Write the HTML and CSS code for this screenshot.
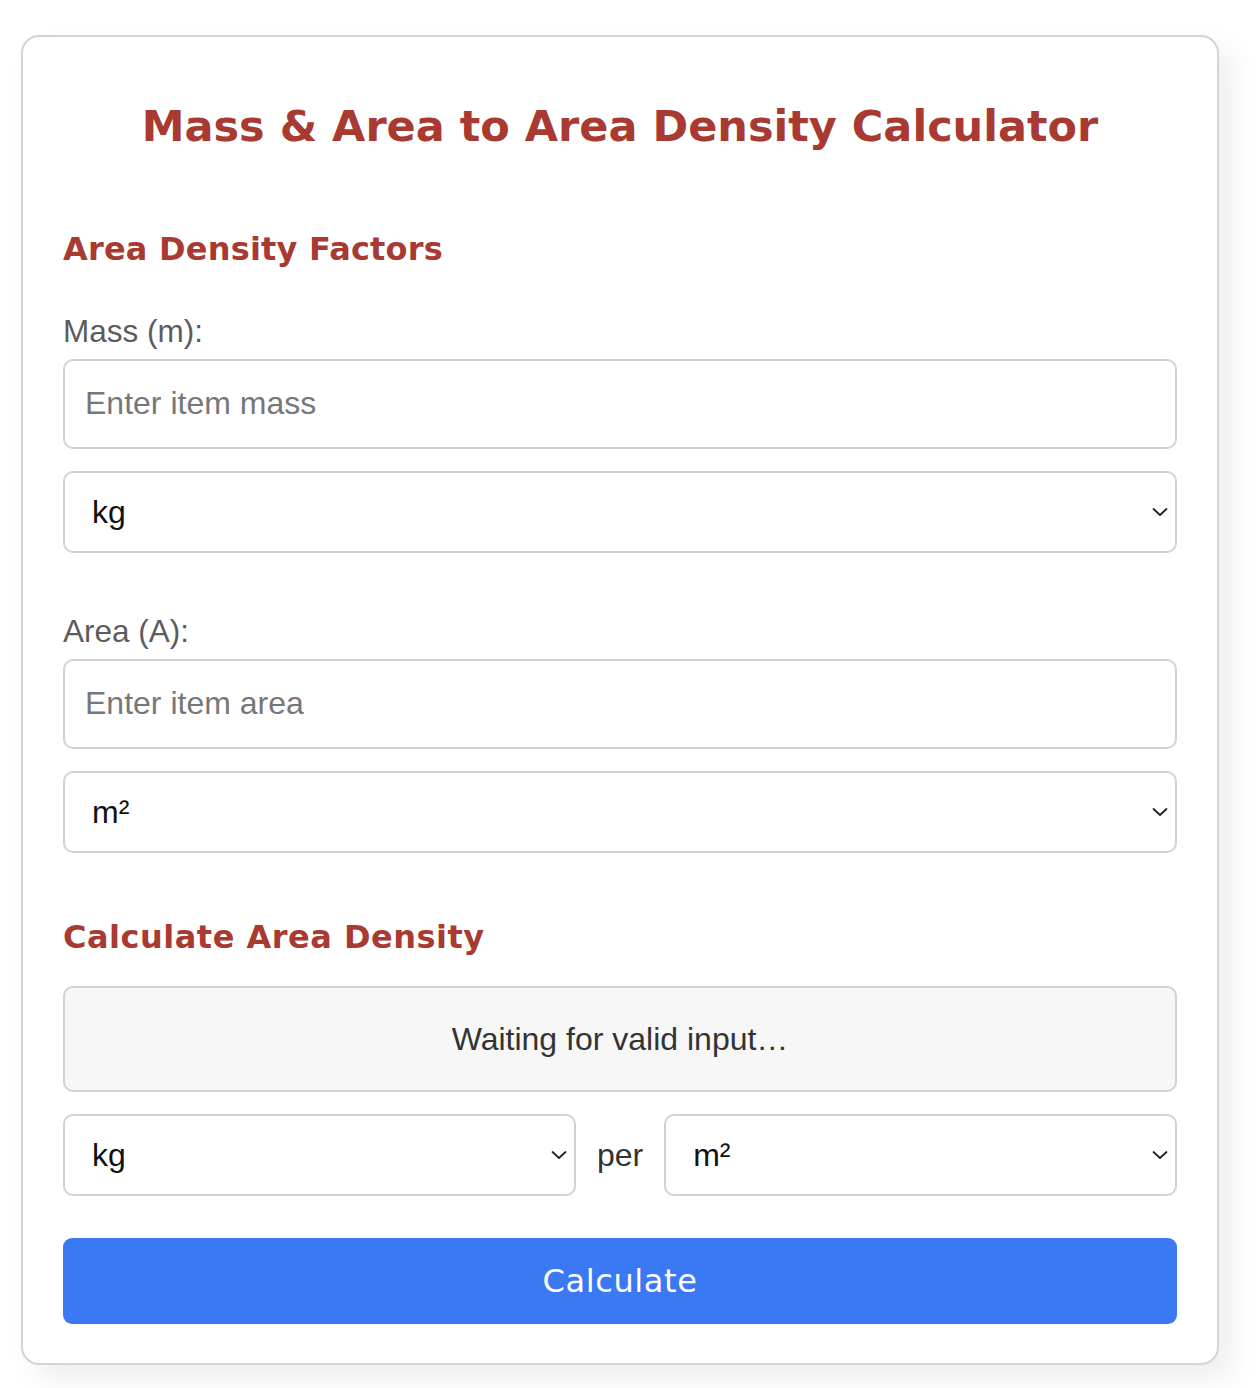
FILE: index.html
```html
<!DOCTYPE html>
<html lang="en">
<head>
<meta charset="utf-8">
<title>Mass &amp; Area to Area Density Calculator</title>
<link rel="stylesheet" href="styles.css">
</head>
<body>
<div class="card">
  <h1 class="title">Mass &amp; Area to Area Density Calculator</h1>

  <h2 class="section">Area Density Factors</h2>

  <div class="group">
    <label class="label" for="mass">Mass (m):</label>
    <input class="field" id="mass" type="text" placeholder="Enter item mass">
    <div class="select-wrap">
      <select class="select"><option>kg</option><option>g</option><option>lb</option></select>
      <svg class="chev" viewBox="0 0 16 10" width="16" height="10"><path d="M1.5 2 L8 8 L14.5 2" fill="none" stroke="#222" stroke-width="1.8" stroke-linecap="round" stroke-linejoin="round"/></svg>
    </div>
  </div>

  <div class="group">
    <label class="label" for="area">Area (A):</label>
    <input class="field" id="area" type="text" placeholder="Enter item area">
    <div class="select-wrap">
      <select class="select"><option>m²</option><option>cm²</option><option>ft²</option></select>
      <svg class="chev" viewBox="0 0 16 10" width="16" height="10"><path d="M1.5 2 L8 8 L14.5 2" fill="none" stroke="#222" stroke-width="1.8" stroke-linecap="round" stroke-linejoin="round"/></svg>
    </div>
  </div>

  <h2 class="section section-calc">Calculate Area Density</h2>

  <div class="result">Waiting for valid input…</div>

  <div class="unit-row">
    <div class="select-wrap grow">
      <select class="select"><option>kg</option><option>g</option></select>
      <svg class="chev" viewBox="0 0 16 10" width="16" height="10"><path d="M1.5 2 L8 8 L14.5 2" fill="none" stroke="#222" stroke-width="1.8" stroke-linecap="round" stroke-linejoin="round"/></svg>
    </div>
    <span class="per">per</span>
    <div class="select-wrap grow">
      <select class="select"><option>m²</option><option>cm²</option></select>
      <svg class="chev" viewBox="0 0 16 10" width="16" height="10"><path d="M1.5 2 L8 8 L14.5 2" fill="none" stroke="#222" stroke-width="1.8" stroke-linecap="round" stroke-linejoin="round"/></svg>
    </div>
  </div>

  <button class="btn" type="button">Calculate</button>
</div>
</body>
</html>
```

FILE: styles.css
```css
* { box-sizing: border-box; }

html, body {
  margin: 0;
  padding: 0;
  background: #ffffff;
}

body {
  padding: 35px 0 24px 21px;
  font-family: "Liberation Sans", Arial, sans-serif;
}

.card {
  width: 1198px;
  background: #fff;
  border: 2px solid #d4d4d4;
  border-radius: 18px;
  padding: 40px 40px 39px;
  box-shadow: 14px 14px 30px rgba(0, 0, 0, 0.07);
}

.title {
  margin: 24px 0 0;
  text-align: center;
  font-family: "DejaVu Sans", Inter, sans-serif;
  font-weight: 700;
  font-size: 43px;
  line-height: 1.2;
  color: #a83a32;
}

.section {
  margin: 77px 0 0;
  font-family: "DejaVu Sans", Inter, sans-serif;
  font-weight: 700;
  font-size: 32px;
  line-height: 1.2;
  letter-spacing: 0.2px;
  color: #a83a32;
}

.section-calc {
  margin-top: 65px;
  letter-spacing: 0.5px;
}

.group {
  margin-top: 46px;
}

.group + .group {
  margin-top: 61px;
}

.label {
  display: block;
  font-size: 31.5px;
  line-height: 34px;
  color: #5c5c5c;
  margin-bottom: 11px;
}

.field {
  display: block;
  width: 100%;
  height: 90px;
  border: 2px solid #d2d2d2;
  border-radius: 10px;
  padding: 0 20px;
  font-family: "Liberation Sans", Arial, sans-serif;
  font-size: 32px;
  color: #111;
  background: #fff;
  outline: none;
}

.field::placeholder {
  color: #777;
}

.select-wrap {
  position: relative;
  margin-top: 22px;
}

.select {
  display: block;
  width: 100%;
  height: 82px;
  border: 2px solid #d2d2d2;
  border-radius: 10px;
  padding: 0 40px 0 27px;
  font-family: "Liberation Sans", Arial, sans-serif;
  font-size: 32px;
  color: #111;
  background: #fff;
  appearance: none;
  -webkit-appearance: none;
  outline: none;
}

.chev {
  position: absolute;
  right: 9px;
  top: 36px;
  width: 16px;
  height: 10px;
  pointer-events: none;
}

.result {
  margin-top: 30px;
  height: 106px;
  border: 2px solid #d2d2d2;
  border-radius: 10px;
  background: #f7f7f7;
  display: flex;
  align-items: center;
  justify-content: center;
  font-size: 32px;
  color: #333;
}

.unit-row {
  display: flex;
  align-items: center;
  gap: 21px;
  margin-top: 22px;
}

.unit-row .select-wrap {
  margin-top: 0;
}

.grow {
  flex: 1 1 0;
}

.per {
  font-size: 32px;
  color: #333;
}

.btn {
  display: block;
  width: 100%;
  height: 86px;
  margin-top: 42px;
  border: none;
  border-radius: 9px;
  background: #3b79f4;
  color: #fff;
  font-family: "DejaVu Sans", Inter, sans-serif;
  font-weight: 400;
  font-size: 32px;
  letter-spacing: 0.6px;
  cursor: pointer;
}
```
